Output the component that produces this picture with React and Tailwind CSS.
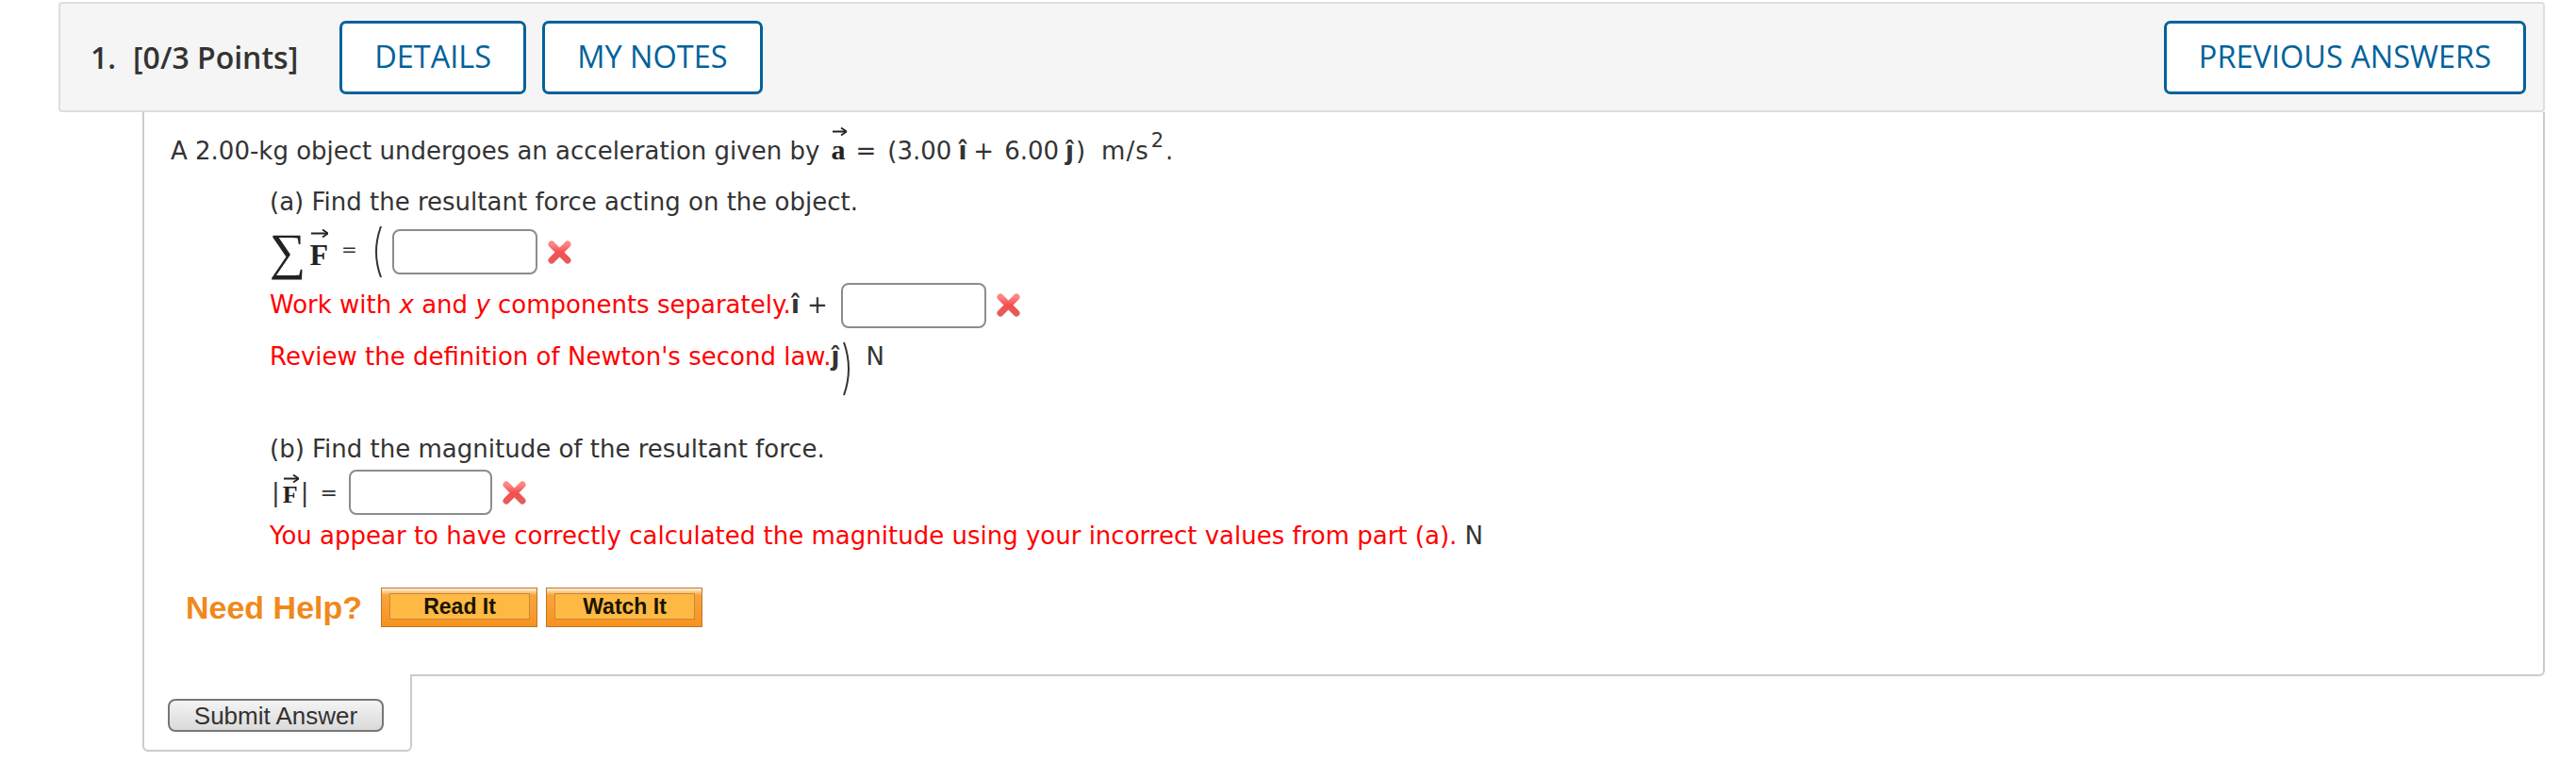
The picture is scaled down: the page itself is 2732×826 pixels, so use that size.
import React from "react";

const body = { fontFamily: '"DejaVu Sans", Verdana, sans-serif' };
const serif = { fontFamily: '"Liberation Serif", "Times New Roman", serif' };
const open = { fontFamily: '"Open Sans", sans-serif' };
const arial = { fontFamily: '"Liberation Sans", Arial, sans-serif' };

function Arrow({ w = 16 }) {
  return (
    <svg width={w} height="9" viewBox={`0 0 ${w} 9`} className="block">
      <line x1="0" y1="4.5" x2={w - 1} y2="4.5" stroke="#222" strokeWidth="2" />
      <path d={`M${w - 6} 0.5 L${w} 4.5 L${w - 6} 8.5`} fill="none" stroke="#222" strokeWidth="1.8" />
    </svg>
  );
}

function Vec({ ch, size, arrowTop, arrowW }) {
  return (
    <span className="relative inline-block font-bold text-[#222]" style={{ ...serif, fontSize: size, lineHeight: 1 }}>
      {ch}
      <span className="absolute left-[1px]" style={{ top: arrowTop }}>
        <Arrow w={arrowW} />
      </span>
    </span>
  );
}

function RedX() {
  return (
    <svg width="27" height="27" viewBox="0 0 27 27" className="block">
      <defs>
        <linearGradient id="xg" x1="0" y1="0" x2="0" y2="1">
          <stop offset="0" stopColor="#ff8585" />
          <stop offset="0.5" stopColor="#f24f4f" />
          <stop offset="1" stopColor="#e85a5a" />
        </linearGradient>
      </defs>
      <path d="M5 5 L22 22 M22 5 L5 22" stroke="url(#xg)" strokeWidth="7" strokeLinecap="round" />
    </svg>
  );
}

function Box({ w = 154 }) {
  return (
    <input
      type="text"
      readOnly
      className="h-[48px] border-2 border-[#8c8c8c] rounded-[8px] bg-white outline-none"
      style={{ width: w }}
    />
  );
}

function Paren({ right = false, h = 56 }) {
  return (
    <svg width="13" height={h} viewBox={`0 0 13 ${h}`} className="block">
      <path
        d={right ? `M2 1 Q12 ${h / 2} 2 ${h - 1}` : `M11 1 Q1 ${h / 2} 11 ${h - 1}`}
        fill="none"
        stroke="#333"
        strokeWidth="2"
      />
    </svg>
  );
}

function HeaderBtn({ children }) {
  return (
    <div
      className="h-[78px] px-[34px] flex items-center border-[3px] border-[#00629b] rounded-[7px] bg-white text-[#00629b] text-[32.5px] font-medium"
      style={open}
    >
      {children}
    </div>
  );
}

function OrangeBtn({ children, w }) {
  return (
    <div
      className="h-[42px] border border-[#b8772f] bg-[linear-gradient(#fff3dc_0%,#f9a43a_18%,#f7931e_100%)] pl-[8px] pr-[7px] pt-[5px] pb-[7px]"
      style={{ width: w }}
    >
      <div
        className="h-full border border-[#c98838] bg-[#fdb943] flex items-center justify-center text-[23px] font-bold text-[#1a1400]"
        style={arial}
      >
        {children}
      </div>
    </div>
  );
}

export default function App() {
  return (
    <div className="w-[2732px] h-[826px] bg-white overflow-hidden pt-[2px]" style={body}>
      {/* Header */}
      <div className="ml-[62px] w-[2637px] h-[117px] border-2 border-[#dedede] rounded-[4px] bg-[#f5f5f5] flex items-center pl-[32px] pr-[18px]">
        <div className="text-[32px] font-semibold text-[#333] flex items-center" style={open}>
          <span>1.</span>
          <span className="ml-[18px]">[0/3 Points]</span>
        </div>
        <div className="ml-[44px] flex gap-[17px]">
          <HeaderBtn>DETAILS</HeaderBtn>
          <HeaderBtn>MY NOTES</HeaderBtn>
        </div>
        <div className="ml-auto">
          <HeaderBtn>PREVIOUS ANSWERS</HeaderBtn>
        </div>
      </div>

      {/* Content */}
      <div className="ml-[151px] w-[2548px]">
        <div className="h-[598px] border-x-2 border-b-2 border-[#cbcbcb] rounded-br-[6px] pl-[28px] pt-[21px] text-[26px] text-[#333]">
          <div className="h-[40px] flex items-center whitespace-pre">
            <span>A 2.00-kg object undergoes an acceleration given by </span>
            <span className="ml-[4px]">
              <Vec ch="a" size="30px" arrowTop="-9px" arrowW={15} />
            </span>
            <span className="ml-[11px]">=</span>
            <span className="ml-[12px]">(3.00</span>
            <span className="ml-[7px] font-bold">î</span>
            <span className="ml-[7px]">+</span>
            <span className="ml-[11px]">6.00</span>
            <span className="ml-[7px] font-bold">ĵ</span>
            <span className="ml-[2px]">)</span>
            <span className="ml-[17px] tracking-[1px]">m/s</span>
            <span className="ml-[2px] relative -top-[10px] text-[21px]">2</span>
            <span className="ml-[2px]">.</span>
          </div>

          <div className="pl-[105px]">
            <div className="mt-[14px] h-[40px] flex items-center">(a) Find the resultant force acting on the object.</div>

            <div className="mt-[3px] h-[60px] flex items-center">
              <span className="text-[54px] leading-none text-[#222]" style={serif}>∑</span>
              <span className="ml-[4px] mt-[10px]">
                <Vec ch="F" size="32px" arrowTop="-11px" arrowW={18} />
              </span>
              <span className="ml-[14px] text-[20px] -mt-[6px]">=</span>
              <span className="ml-[14px]"><Paren h={56} /></span>
              <span className="ml-[10px]"><Box /></span>
              <span className="ml-[10px]"><RedX /></span>
            </div>

            <div className="h-[53px] flex items-center whitespace-pre">
              <span className="text-[#ff0000]">
                Work with <i>x</i> and <i>y</i> components separately.
              </span>
              <span className="font-bold">î</span>
              <span> + </span>
              <span className="ml-[6px]"><Box /></span>
              <span className="ml-[10px]"><RedX /></span>
            </div>

            <div className="h-[56px] flex items-center whitespace-pre">
              <span className="text-[#ff0000]">Review the definition of Newton's second law.</span>
              <span className="font-bold">ĵ</span>
              <span className="ml-[3px] mt-[26px]"><Paren right h={58} /></span>
              <span className="ml-[12px]">N</span>
            </div>

            <div className="mt-[50px] h-[40px] flex items-center">(b) Find the magnitude of the resultant force.</div>

            <div className="h-[52px] flex items-center">
              <span className="ml-[2px] text-[#333]">|</span>
              <span className="ml-[3px] mt-[4px]">
                <Vec ch="F" size="26px" arrowTop="-9px" arrowW={16} />
              </span>
              <span className="ml-[3px] text-[#333]">|</span>
              <span className="ml-[12px] text-[22px]">=</span>
              <span className="ml-[12px]"><Box w={152} /></span>
              <span className="ml-[10px]"><RedX /></span>
            </div>

            <div className="h-[40px] flex items-center whitespace-pre">
              <span className="text-[#ff0000]">
                You appear to have correctly calculated the magnitude using your incorrect values from part (a).
              </span>
              <span> N</span>
            </div>
          </div>

          <div className="mt-[35px] ml-[16px] h-[42px] flex items-center">
            <span className="text-[34px] font-bold text-[#f0891a] mr-[20px]" style={arial}>Need Help?</span>
            <OrangeBtn w={166}>Read It</OrangeBtn>
            <span className="ml-[9px]"><OrangeBtn w={166}>Watch It</OrangeBtn></span>
          </div>
        </div>

        <div className="relative -mt-[2px] w-[286px] h-[82px] border-x-2 border-b-2 border-[#cbcbcb] rounded-b-[6px] bg-white pl-[25px] pt-[26px]">
          <button
            className="w-[229px] h-[35px] border-2 border-[#777] rounded-[8px] bg-[linear-gradient(#f4f4f4,#dadada)] text-[26px] text-[#333] leading-none flex items-center justify-center"
            style={arial}
          >
            Submit Answer
          </button>
        </div>
      </div>
    </div>
  );
}
